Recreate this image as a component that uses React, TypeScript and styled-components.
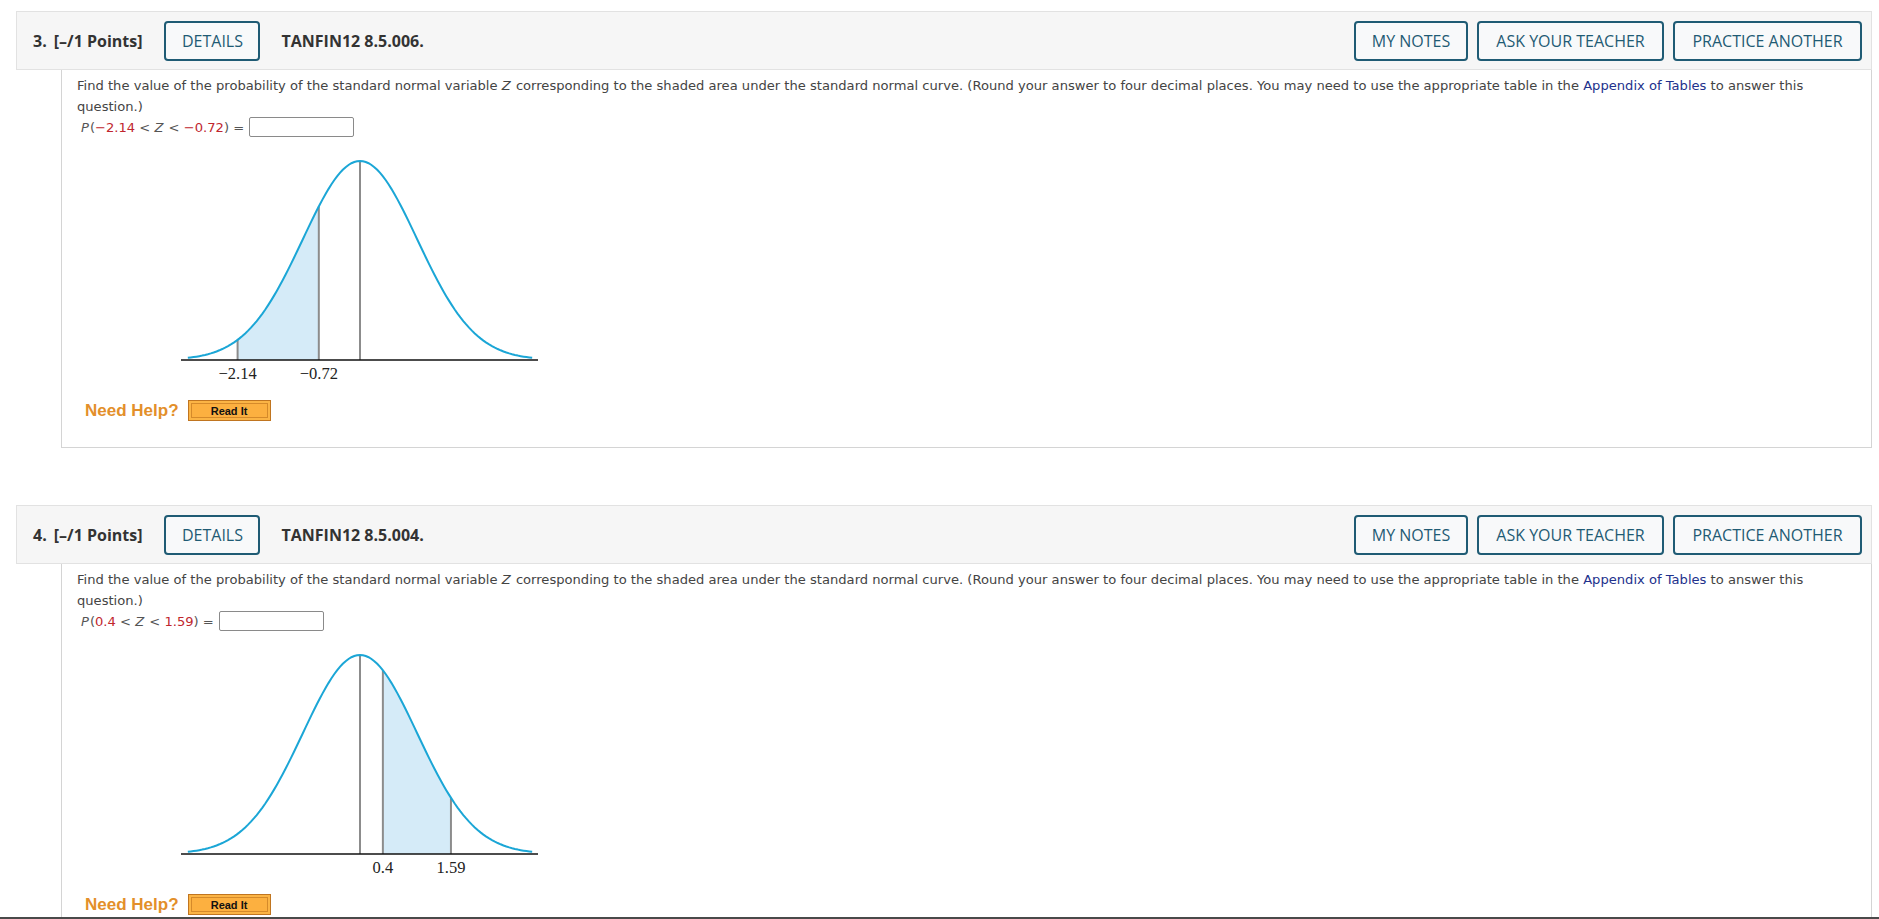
import React from "react";
import styled, { createGlobalStyle } from "styled-components";

const GlobalStyle = createGlobalStyle`
    html, body {
        margin: 0;
        padding: 0;
        background: #ffffff;
    }
    body {
        font-family: "Open Sans", "Liberation Sans", sans-serif;
        overflow: hidden;
    }
`;

const Page = styled.div`
    padding: 11px 7px 0 16px;
`;

const QuestionBlock = styled.section`
    margin-bottom: 57px;
`;

const Header = styled.div`
    display: flex;
    align-items: center;
    height: 57px;
    padding: 0 9px 0 16px;
    background: #f6f6f6;
    border: 1px solid #e2e2e2;
`;

const Number = styled.span`
    font-weight: 700;
    font-size: 16px;
    color: #333;
    margin-right: 7px;
`;

const Points = styled.span`
    font-weight: 700;
    font-size: 16px;
    color: #333;
    margin-right: 22px;
`;

const Code = styled.span`
    font-weight: 700;
    font-size: 16px;
    color: #333;
    margin-left: 21px;
`;

const Spacer = styled.div`
    flex: 1;
`;

const Actions = styled.div`
    display: flex;
    gap: 9px;
`;

const HeaderButton = styled.button<{ $w: number }>`
    box-sizing: border-box;
    width: ${(p) => p.$w}px;
    height: 40px;
    border: 2px solid #1f5b74;
    border-radius: 4px;
    background: #f8f9fa;
    color: #1f5b74;
    font-family: "Open Sans", "Liberation Sans", sans-serif;
    font-size: 16px;
    padding: 0;
`;

const Body = styled.div`
    margin-left: 45px;
    border: 1px solid #d4d4d4;
    border-top: none;
    padding: 6px 15px 26px 15px;
`;

const Prompt = styled.p`
    margin: 0;
    font-family: "DejaVu Sans", Verdana, sans-serif;
    font-size: 13.1px;
    line-height: 20.5px;
    color: #444;
    padding-right: 40px;
`;

const Link = styled.span`
    color: #22318c;
`;

const Red = styled.span`
    color: #c0262d;
`;

const Var = styled.i`
    padding-right: 1px;
`;

const Equation = styled.div`
    display: flex;
    align-items: center;
    height: 20px;
    padding-left: 4px;
    font-family: "DejaVu Sans", Verdana, sans-serif;
    font-size: 13.1px;
    color: #555;
    white-space: pre;
`;

const AnswerBox = styled.span`
    display: inline-block;
    box-sizing: border-box;
    width: 105px;
    height: 20px;
    margin-left: 5px;
    border: 1px solid #8a8a8a;
    border-radius: 2px;
    background: #fff;
`;

const Graph = styled.svg`
    display: block;
    margin: 3px 0 0 93px;
`;

const HelpRow = styled.div`
    display: flex;
    align-items: center;
    gap: 9px;
    margin: 15px 0 0 8px;
`;

const HelpLabel = styled.span`
    font-family: "Liberation Sans", Arial, sans-serif;
    font-weight: 700;
    font-size: 17px;
    color: #e38f2a;
`;

const ReadIt = styled.span`
    box-sizing: border-box;
    display: inline-flex;
    align-items: center;
    justify-content: center;
    width: 83px;
    height: 21px;
    border: 1px solid #c07520;
    box-shadow: inset 0 0 0 2px #fbb445, inset 0 0 0 3px #d58a2a;
    background: #fcb040;
    font-family: "Liberation Sans", Arial, sans-serif;
    font-weight: 700;
    font-size: 11px;
    color: #111;
`;

const BottomEdge = styled.div`
    position: fixed;
    left: 0;
    right: 0;
    bottom: 0;
    height: 2px;
    background: #4a4a4a;
`;

const MEAN_X = 190;
const SIGMA = 57.2;
const AXIS_Y = 220;
const PEAK = 199;

const yAt = (z: number) => AXIS_Y - PEAK * Math.exp(-(z * z) / 2);
const xAt = (z: number) => MEAN_X + z * SIGMA;

const curvePath = (from: number, to: number) => {
    const pts: string[] = [];
    const steps = 120;
    for (let i = 0; i <= steps; i++) {
        const z = from + ((to - from) * i) / steps;
        pts.push(`${xAt(z).toFixed(2)},${yAt(z).toFixed(2)}`);
    }
    return pts;
};

type CurveProps = { lo: number; hi: number; labels: string[] };

const NormalCurve = ({ lo, hi, labels }: CurveProps) => {
    const line = curvePath(-3.01, 3.01);
    const area = curvePath(lo, hi);
    const shade = `M${xAt(lo)},${AXIS_Y} L${area.join(" L")} L${xAt(hi)},${AXIS_Y} Z`;
    return (
        <Graph width={380} height={245} viewBox="0 0 380 245">
            <path d={shade} fill="#d5ebf8" />
            <line x1={MEAN_X} y1={AXIS_Y} x2={MEAN_X} y2={yAt(0)} stroke="#8c8c8c" strokeWidth={2} />
            {[lo, hi].map((z) => (
                <line key={z} x1={xAt(z)} y1={AXIS_Y} x2={xAt(z)} y2={yAt(z)} stroke="#8c8c8c" strokeWidth={2} />
            ))}
            <line x1={11} y1={AXIS_Y} x2={368} y2={AXIS_Y} stroke="#111" strokeWidth={1.5} />
            <path d={`M${line.join(" L")}`} fill="none" stroke="#1ba6d6" strokeWidth={2} />
            {[lo, hi].map((z, i) => (
                <text
                    key={i}
                    x={xAt(z)}
                    y={AXIS_Y + 19}
                    textAnchor="middle"
                    fontFamily="'Liberation Serif', 'Times New Roman', serif"
                    fontSize={16.5}
                    fill="#222"
                >
                    {labels[i]}
                </text>
            ))}
        </Graph>
    );
};

type QuestionProps = {
    num: number;
    code: string;
    lo: number;
    hi: number;
    labels: string[];
};

const Question = ({ num, code, lo, hi, labels }: QuestionProps) => (
    <QuestionBlock>
        <Header>
            <Number>{num}.</Number>
            <Points>[–/1 Points]</Points>
            <HeaderButton $w={96}>DETAILS</HeaderButton>
            <Code>{code}</Code>
            <Spacer />
            <Actions>
                <HeaderButton $w={114}>MY NOTES</HeaderButton>
                <HeaderButton $w={187}>ASK YOUR TEACHER</HeaderButton>
                <HeaderButton $w={189}>PRACTICE ANOTHER</HeaderButton>
            </Actions>
        </Header>
        <Body>
            <Prompt>
                Find the value of the probability of the standard normal variable <Var>Z</Var> corresponding to the
                shaded area under the standard normal curve. (Round your answer to four decimal places. You may
                need to use the appropriate table in the <Link>Appendix of Tables</Link> to answer this question.)
            </Prompt>
            <Equation>
                <Var>P</Var>(<Red>{labels[0]}</Red> &lt; <Var>Z</Var> &lt; <Red>{labels[1]}</Red>) =
                <AnswerBox />
            </Equation>
            <NormalCurve lo={lo} hi={hi} labels={labels} />
            <HelpRow>
                <HelpLabel>Need Help?</HelpLabel>
                <ReadIt>Read It</ReadIt>
            </HelpRow>
        </Body>
    </QuestionBlock>
);

export default function App() {
    return (
        <>
            <GlobalStyle />
            <Page>
                <Question num={3} code="TANFIN12 8.5.006." lo={-2.14} hi={-0.72} labels={["−2.14", "−0.72"]} />
                <Question num={4} code="TANFIN12 8.5.004." lo={0.4} hi={1.59} labels={["0.4", "1.59"]} />
            </Page>
            <BottomEdge />
        </>
    );
}
